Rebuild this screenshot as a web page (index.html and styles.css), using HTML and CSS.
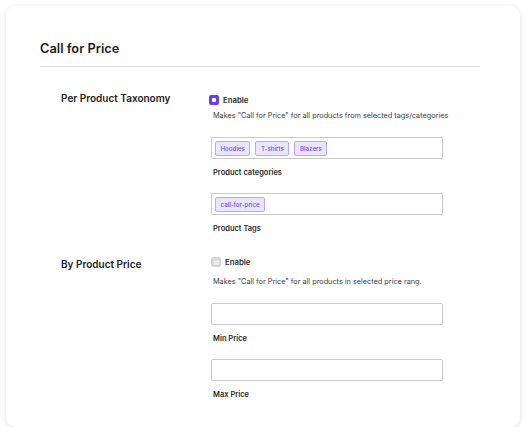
FILE: index.html
```html
<!DOCTYPE html>
<html>
<head>
<meta charset="utf-8">
<link rel="stylesheet" href="styles.css">
</head>
<body>
<div class="card">
  <h1 class="title">Call for Price</h1>
  <div class="divider"></div>

  <div class="row row-first">
    <div class="row-label row-label-high">Per Product Taxonomy</div>
    <div class="fields">
      <label class="check">
        <span class="box box-on"><span class="box-dot"></span></span>
        <span class="check-text">Enable</span>
      </label>
      <p class="desc desc-a">Makes "Call for Price" for all products from selected tags/categories</p>
      <div class="input">
        <span class="chip">Hoodies</span>
        <span class="chip">T-shirts</span>
        <span class="chip">Blazers</span>
      </div>
      <div class="field-label">Product categories</div>
      <div class="input">
        <span class="chip">call-for-price</span>
      </div>
      <div class="field-label">Product Tags</div>
    </div>
  </div>

  <div class="row row-second">
    <div class="row-label row-label-low">By Product Price</div>
    <div class="fields">
      <label class="check">
        <span class="box box-off"><span class="box-dot"></span></span>
        <span class="check-text">Enable</span>
      </label>
      <p class="desc desc-b">Makes "Call for Price" for all products in selected price rang.</p>
      <div class="input"></div>
      <div class="field-label">Min Price</div>
      <div class="input"></div>
      <div class="field-label">Max Price</div>
    </div>
  </div>
</div>
</body>
</html>
```

FILE: styles.css
```css
html, body {
  margin: 0;
  padding: 0;
  background: #ffffff;
}
body {
  padding: 6px 0 0 6px;
  font-family: Inter, "Noto Sans", sans-serif;
  color: #1f1f1f;
}
.card {
  box-sizing: border-box;
  width: 514px;
  height: 421px;
  background: #ffffff;
  border-radius: 10px;
  box-shadow: 0 1px 6px rgba(0, 0, 0, 0.10);
  padding: 34px 40px 0 34px;
}
.title {
  margin: 0;
  font-size: 12.8px;
  line-height: 17px;
  font-weight: 600;
  color: #1c1c1c;
}
.divider {
  margin-top: 9px;
  height: 1px;
  background: #dedede;
}
.row {
  display: grid;
  grid-template-columns: 171px 1fr;
}
.row-first {
  margin-top: 27px;
}
.row-second {
  margin-top: 21px;
}
.row-label {
  padding-left: 21px;
  font-size: 10px;
  line-height: 12px;
  font-weight: 600;
  color: #222;
}
.row-label-high {
  margin-top: -2px;
}
.row-label-low {
  padding-top: 2px;
}
.fields {
  display: flex;
  flex-direction: column;
  align-items: flex-start;
}
.check {
  display: flex;
  align-items: center;
  gap: 4px;
  height: 12px;
}
.box {
  box-sizing: border-box;
  width: 10px;
  height: 10px;
  border-radius: 2px;
  display: flex;
  align-items: center;
  justify-content: center;
}
.box-on {
  background: #6a3df3;
  margin-left: -2px;
}
.box-on .box-dot {
  width: 4px;
  height: 4px;
  background: #ffffff;
  border-radius: 1px;
}
.box-off {
  background: #d6d6d6;
}
.box-off .box-dot {
  width: 5px;
  height: 5px;
  background: #ececec;
  border-radius: 1px;
}
.check-text {
  font-size: 7.8px;
  font-weight: 600;
  color: #2a2a2a;
}
.desc {
  margin: 0;
  font-size: 7.3px;
  line-height: 12px;
  color: #3e3e3e;
  padding-left: 2px;
}
.desc-a {
  margin-top: 4px;
}
.desc-b {
  margin-top: 8px;
}
.input {
  box-sizing: border-box;
  margin-top: 15px;
  width: 232px;
  height: 22px;
  border: 1px solid #c9c9c9;
  border-radius: 2px;
  display: flex;
  align-items: center;
  gap: 5px;
  padding-left: 3px;
  background: #fff;
}
.field-label + .input {
  margin-top: 14px;
}
.chip {
  box-sizing: border-box;
  height: 15px;
  display: flex;
  align-items: center;
  padding: 0 4.5px;
  background: #ebe6ff;
  border: 1px solid #b8a6fb;
  border-radius: 2px;
  font-size: 6.2px;
  font-weight: 500;
  color: #6f4ff0;
}
.field-label {
  margin-top: 8px;
  padding-left: 2px;
  font-size: 7.5px;
  line-height: 12px;
  font-weight: 600;
  color: #2a2a2a;
}
```
